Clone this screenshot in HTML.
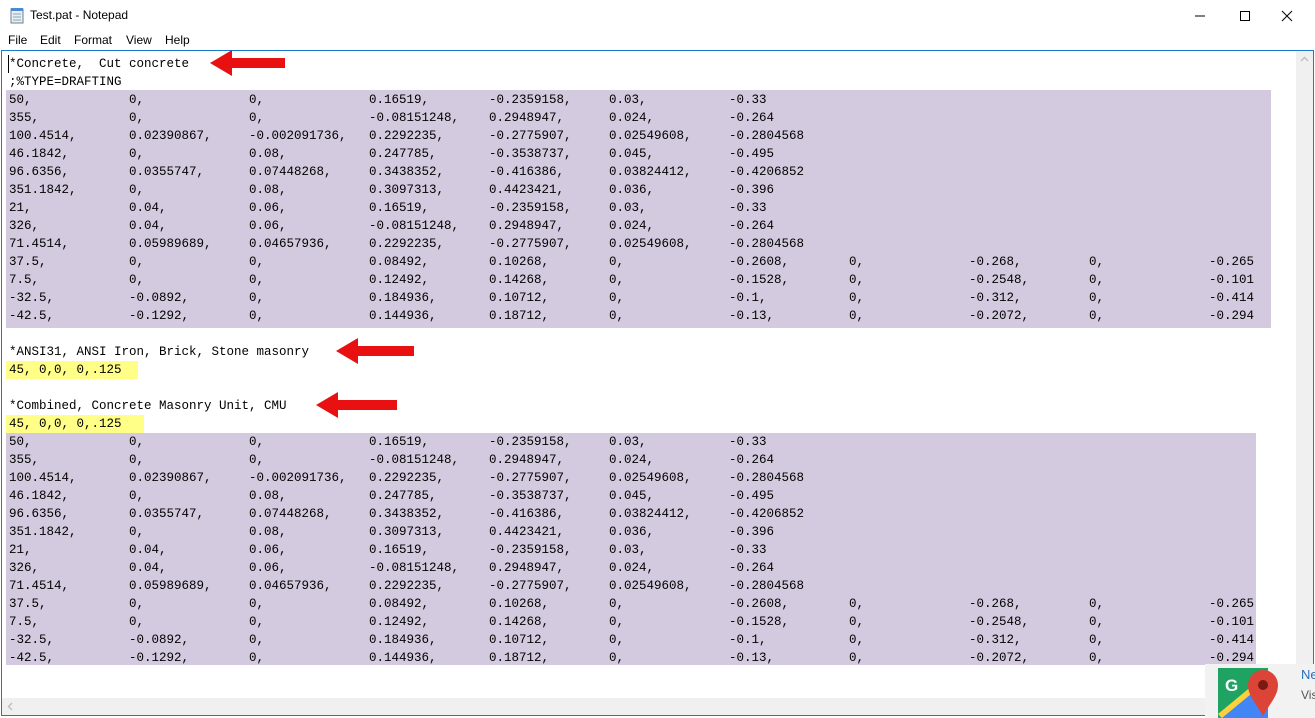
<!DOCTYPE html>
<html><head><meta charset="utf-8"><style>
body{margin:0;width:1315px;height:718px;overflow:hidden;background:#fff;position:relative;font-family:"Segoe UI","Liberation Sans",sans-serif}
.title{position:absolute;left:0;top:0;width:1315px;height:31px;background:#fff;font-size:12px;color:#000}
.menu{position:absolute;left:0;top:31px;width:1315px;height:19px;font-size:12px}
.menu span{position:absolute;top:2px}
.edit{position:absolute;left:1px;top:50px;width:1313px;height:666px;border:1px solid #1979ca;box-sizing:border-box;overflow:hidden}
.txt{position:absolute;left:7px;top:4px;font-family:"Liberation Mono",monospace;font-size:12.5px;color:#000}
.r{height:18px;line-height:18px;white-space:pre}
.r i{font-style:normal;display:inline-block;width:120px}
.bg{position:absolute}
.vs{position:absolute;right:0;top:0;width:17px;height:647px;background:#f0f0f0}
.hs{position:absolute;left:0;bottom:0;width:1294px;height:17px;background:#f0f0f0}
</style></head><body>
<div class="title">
<svg style="position:absolute;left:9px;top:7px" width="16" height="17"><rect x="2" y="2" width="12" height="14" fill="#e8eef4" stroke="#6a7f95"/><rect x="2" y="1" width="12" height="3" fill="#4a8ad0"/><line x1="4" y1="7" x2="12" y2="7" stroke="#8aa"/><line x1="4" y1="10" x2="12" y2="10" stroke="#8aa"/><line x1="4" y1="13" x2="12" y2="13" stroke="#8aa"/></svg>
<span style="position:absolute;left:30px;top:8px">Test.pat - Notepad</span>
<svg style="position:absolute;left:1190px;top:8px" width="120" height="16"><line x1="5" y1="8" x2="15" y2="8" stroke="#000"/><rect x="50.5" y="3.5" width="9" height="9" fill="none" stroke="#000"/><path d="M92 3 L102 13 M102 3 L92 13" stroke="#000"/></svg>
</div>
<div class="menu"><span style="left:8px">File</span><span style="left:40px">Edit</span><span style="left:74px">Format</span><span style="left:126px">View</span><span style="left:165px">Help</span></div>
<div class="edit">
<div class="bg" style="left:4px;top:39px;width:1265px;height:238px;background:#d4cadf"></div>
<div class="bg" style="left:4px;top:310px;width:132px;height:18px;background:#ffff88"></div>
<div class="bg" style="left:4px;top:364px;width:138px;height:18px;background:#ffff88"></div>
<div class="bg" style="left:4px;top:382px;width:1250px;height:232px;background:#d4cadf"></div>
<div class="txt"><div class="r" style="border-left:1px solid #000;margin-left:-1px">*Concrete,  Cut concrete</div><div class="r">;%TYPE=DRAFTING</div><div class="r"><i>50,</i><i>0,</i><i>0,</i><i>0.16519,</i><i>-0.2359158,</i><i>0.03,</i><i>-0.33</i></div><div class="r"><i>355,</i><i>0,</i><i>0,</i><i>-0.08151248,</i><i>0.2948947,</i><i>0.024,</i><i>-0.264</i></div><div class="r"><i>100.4514,</i><i>0.02390867,</i><i>-0.002091736,</i><i>0.2292235,</i><i>-0.2775907,</i><i>0.02549608,</i><i>-0.2804568</i></div><div class="r"><i>46.1842,</i><i>0,</i><i>0.08,</i><i>0.247785,</i><i>-0.3538737,</i><i>0.045,</i><i>-0.495</i></div><div class="r"><i>96.6356,</i><i>0.0355747,</i><i>0.07448268,</i><i>0.3438352,</i><i>-0.416386,</i><i>0.03824412,</i><i>-0.4206852</i></div><div class="r"><i>351.1842,</i><i>0,</i><i>0.08,</i><i>0.3097313,</i><i>0.4423421,</i><i>0.036,</i><i>-0.396</i></div><div class="r"><i>21,</i><i>0.04,</i><i>0.06,</i><i>0.16519,</i><i>-0.2359158,</i><i>0.03,</i><i>-0.33</i></div><div class="r"><i>326,</i><i>0.04,</i><i>0.06,</i><i>-0.08151248,</i><i>0.2948947,</i><i>0.024,</i><i>-0.264</i></div><div class="r"><i>71.4514,</i><i>0.05989689,</i><i>0.04657936,</i><i>0.2292235,</i><i>-0.2775907,</i><i>0.02549608,</i><i>-0.2804568</i></div><div class="r"><i>37.5,</i><i>0,</i><i>0,</i><i>0.08492,</i><i>0.10268,</i><i>0,</i><i>-0.2608,</i><i>0,</i><i>-0.268,</i><i>0,</i><i>-0.265</i></div><div class="r"><i>7.5,</i><i>0,</i><i>0,</i><i>0.12492,</i><i>0.14268,</i><i>0,</i><i>-0.1528,</i><i>0,</i><i>-0.2548,</i><i>0,</i><i>-0.101</i></div><div class="r"><i>-32.5,</i><i>-0.0892,</i><i>0,</i><i>0.184936,</i><i>0.10712,</i><i>0,</i><i>-0.1,</i><i>0,</i><i>-0.312,</i><i>0,</i><i>-0.414</i></div><div class="r"><i>-42.5,</i><i>-0.1292,</i><i>0,</i><i>0.144936,</i><i>0.18712,</i><i>0,</i><i>-0.13,</i><i>0,</i><i>-0.2072,</i><i>0,</i><i>-0.294</i></div><div class="r"> </div><div class="r">*ANSI31, ANSI Iron, Brick, Stone masonry</div><div class="r">45, 0,0, 0,.125</div><div class="r"> </div><div class="r">*Combined, Concrete Masonry Unit, CMU</div><div class="r">45, 0,0, 0,.125</div><div class="r"><i>50,</i><i>0,</i><i>0,</i><i>0.16519,</i><i>-0.2359158,</i><i>0.03,</i><i>-0.33</i></div><div class="r"><i>355,</i><i>0,</i><i>0,</i><i>-0.08151248,</i><i>0.2948947,</i><i>0.024,</i><i>-0.264</i></div><div class="r"><i>100.4514,</i><i>0.02390867,</i><i>-0.002091736,</i><i>0.2292235,</i><i>-0.2775907,</i><i>0.02549608,</i><i>-0.2804568</i></div><div class="r"><i>46.1842,</i><i>0,</i><i>0.08,</i><i>0.247785,</i><i>-0.3538737,</i><i>0.045,</i><i>-0.495</i></div><div class="r"><i>96.6356,</i><i>0.0355747,</i><i>0.07448268,</i><i>0.3438352,</i><i>-0.416386,</i><i>0.03824412,</i><i>-0.4206852</i></div><div class="r"><i>351.1842,</i><i>0,</i><i>0.08,</i><i>0.3097313,</i><i>0.4423421,</i><i>0.036,</i><i>-0.396</i></div><div class="r"><i>21,</i><i>0.04,</i><i>0.06,</i><i>0.16519,</i><i>-0.2359158,</i><i>0.03,</i><i>-0.33</i></div><div class="r"><i>326,</i><i>0.04,</i><i>0.06,</i><i>-0.08151248,</i><i>0.2948947,</i><i>0.024,</i><i>-0.264</i></div><div class="r"><i>71.4514,</i><i>0.05989689,</i><i>0.04657936,</i><i>0.2292235,</i><i>-0.2775907,</i><i>0.02549608,</i><i>-0.2804568</i></div><div class="r"><i>37.5,</i><i>0,</i><i>0,</i><i>0.08492,</i><i>0.10268,</i><i>0,</i><i>-0.2608,</i><i>0,</i><i>-0.268,</i><i>0,</i><i>-0.265</i></div><div class="r"><i>7.5,</i><i>0,</i><i>0,</i><i>0.12492,</i><i>0.14268,</i><i>0,</i><i>-0.1528,</i><i>0,</i><i>-0.2548,</i><i>0,</i><i>-0.101</i></div><div class="r"><i>-32.5,</i><i>-0.0892,</i><i>0,</i><i>0.184936,</i><i>0.10712,</i><i>0,</i><i>-0.1,</i><i>0,</i><i>-0.312,</i><i>0,</i><i>-0.414</i></div><div class="r"><i>-42.5,</i><i>-0.1292,</i><i>0,</i><i>0.144936,</i><i>0.18712,</i><i>0,</i><i>-0.13,</i><i>0,</i><i>-0.2072,</i><i>0,</i><i>-0.294</i></div></div>
<div class="vs"><svg width="17" height="17"><path d="M5 10 L8.5 6.5 L12 10" fill="none" stroke="#c0c0c0" stroke-width="1.5"/></svg></div>
<div class="hs"><svg width="17" height="17"><path d="M10 5 L6.5 8.5 L10 12" fill="none" stroke="#c0c0c0" stroke-width="1.5"/></svg></div>
</div>
<svg style="position:absolute;left:0;top:0" width="1315" height="718">
<g fill="#e81010">
<path d="M210 63 L232 50 L232 58 L285 58 L285 68 L232 68 L232 76 Z"/>
<path d="M336 351 L358 338 L358 346 L414 346 L414 356 L358 356 L358 364 Z"/>
<path d="M316 405 L338 392 L338 400 L397 400 L397 410 L338 410 L338 418 Z"/>
</g>
</svg>
<div style="position:absolute;left:1205px;top:664px;width:110px;height:54px;background:#f2f2f2">
<svg style="position:absolute;left:13px;top:4px" width="70" height="50"><rect x="0" y="0" width="50" height="50" fill="#1ea362"/><path d="M0 50 L50 8 L50 50 Z" fill="#4285f4"/><path d="M0 46 L46 8 L50 12 L4 50 Z" fill="#fcd13b"/><text x="7" y="23" font-family="Liberation Sans" font-weight="bold" font-size="17" fill="#fff">G</text><path d="M45 48 C38 35 30 28 30 17 A15 15 0 0 1 60 17 C60 28 52 35 45 48 Z" fill="#db4437"/><circle cx="45" cy="17" r="5" fill="#7a1a12"/></svg>
<span style="position:absolute;left:96px;top:3px;font-size:13px;color:#2a6ebb">Ne</span>
<span style="position:absolute;left:96px;top:24px;font-size:12px;color:#555">Vis</span>
</div>
</body></html>
